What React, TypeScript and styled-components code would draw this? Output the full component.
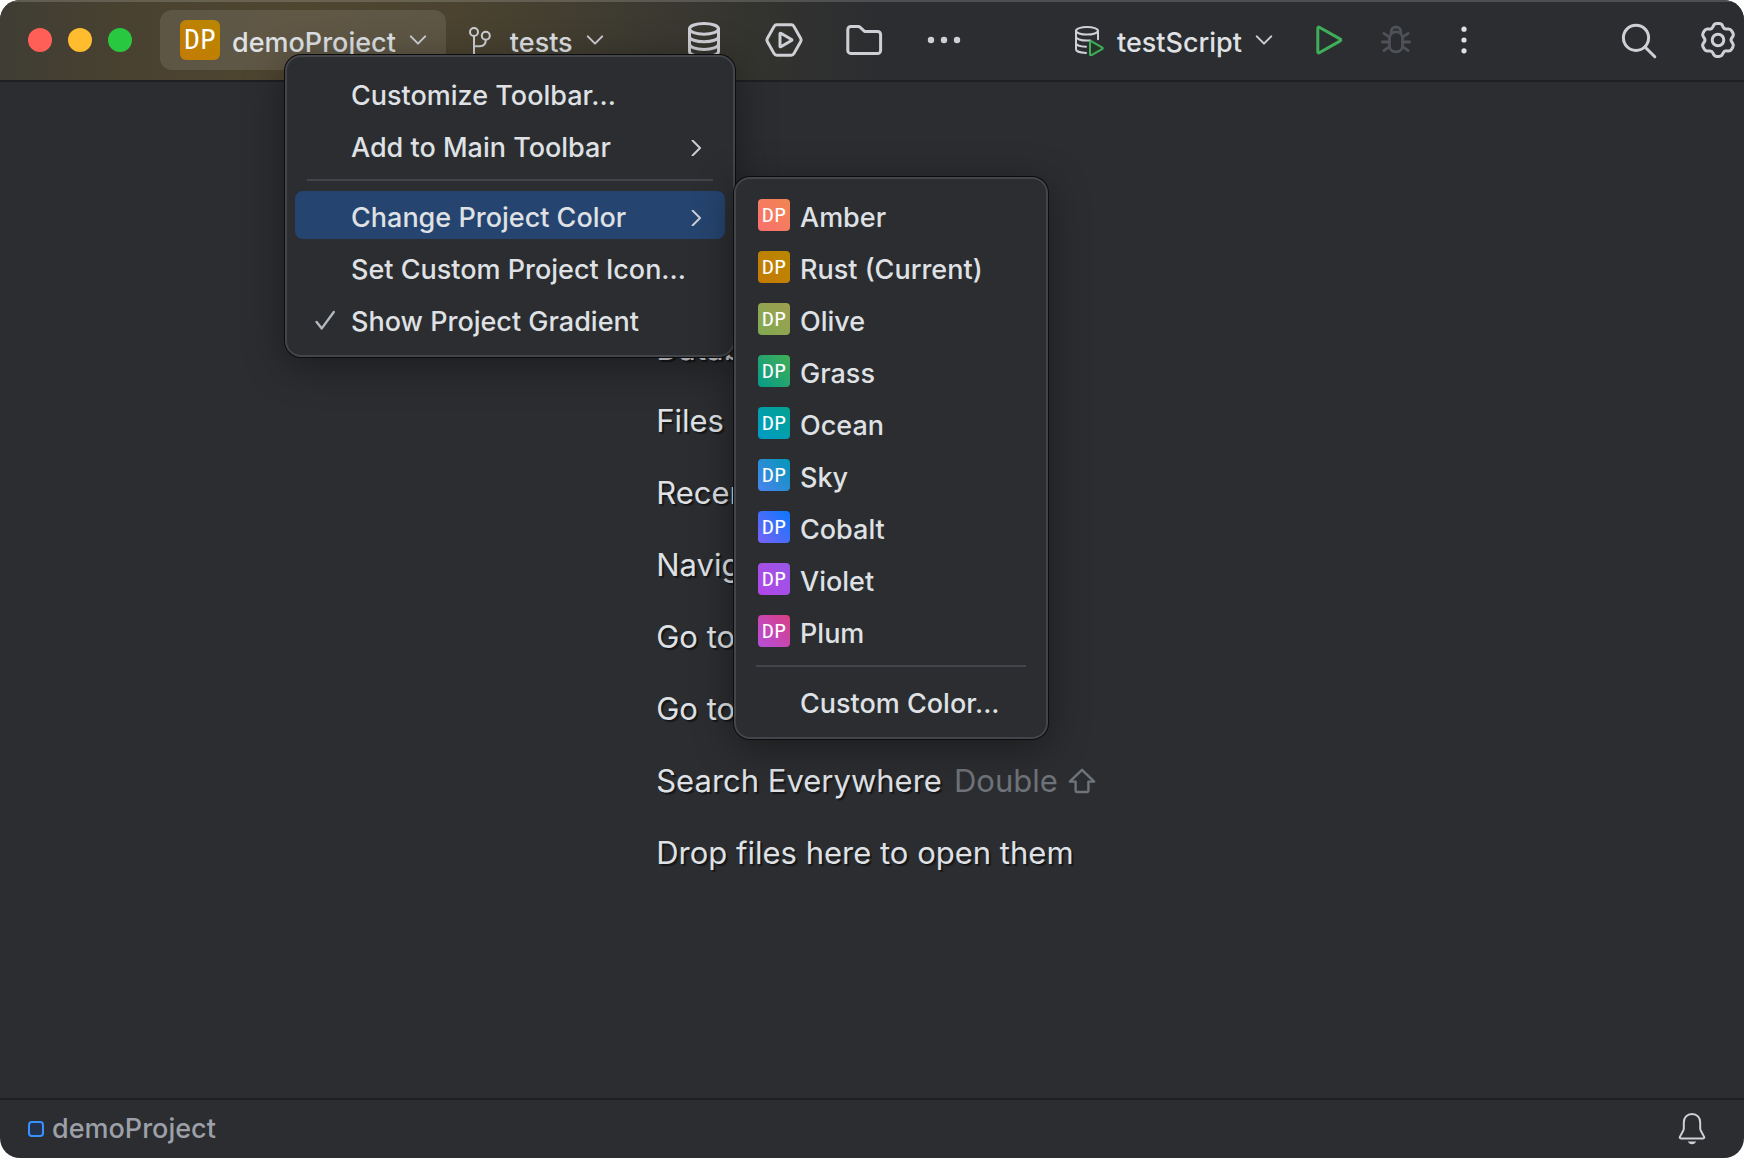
import React from "react";
import styled, { createGlobalStyle, css } from "styled-components";

const GlobalStyle = createGlobalStyle`
  *, *::before, *::after { box-sizing: border-box; }
  html, body, #root { height: 100%; }
  body {
    margin: 0;
    background: #ffffff;
    color: #dfe1e5;
    font-family: Inter, "Liberation Sans", sans-serif;
    font-size: 27px;
    font-weight: 500;
    line-height: 32px;
  }
`;

const resetButton = css`
  border: 0;
  margin: 0;
  padding: 0;
  background: none;
  color: inherit;
  font: inherit;
  text-align: left;
`;

/* ---------- window frame ---------- */

const Window = styled.div`
  display: flex;
  flex-direction: column;
  min-height: 100vh;
  border-radius: 20px;
  overflow: hidden;
  background: #2b2d30;
`;

const Toolbar = styled.header`
  position: relative;
  z-index: 1;
  display: flex;
  align-items: center;
  height: 82px;
  padding: 0 6px 0 28px;
  border-bottom: 2px solid #1e1f22;
  background: linear-gradient(
    90deg,
    #3f3d34 0,
    #4a4230 140px,
    #4f4630 300px,
    #4b4330 460px,
    #3e3b31 620px,
    #33332f 760px,
    #2b2d30 880px
  );
  box-shadow: inset 0 2px 0 rgba(255, 255, 255, 0.16);
`;

const TrafficLights = styled.div`
  display: flex;
  gap: 16px;
  margin-right: 28px;
`;

const Light = styled.button<{ $color: string }>`
  ${resetButton}
  width: 24px;
  height: 24px;
  border-radius: 50%;
  background: ${(p) => p.$color};
`;

const Widget = styled.button<{ $filled?: boolean; $flush?: boolean }>`
  ${resetButton}
  display: flex;
  align-items: center;
  height: 60px;
  padding: 0 ${(p) => (p.$flush ? 0 : 12)}px 0 20px;
  border-radius: 12px;
  background: ${(p) => (p.$filled ? "rgba(255, 255, 255, 0.1)" : "none")};
`;

const WidgetLabel = styled.span`
  padding: 6px 6px 0 12px;
  white-space: nowrap;
`;

const WidgetHost = styled.div`
  position: relative;
`;

const ToolGroup = styled.div<{ $gap: number }>`
  display: flex;
  align-items: center;
  gap: ${(p) => p.$gap}px;
`;

const MainTools = styled(ToolGroup)`
  margin-left: 61px;
`;

const RunTools = styled(ToolGroup)`
  margin-left: auto;
  margin-right: 134px;
`;

const IconButton = styled.button`
  ${resetButton}
  display: grid;
  place-items: center;
  width: 40px;
  height: 40px;
`;

const Icon = styled.svg<{ $size: number }>`
  display: block;
  flex: none;
  width: ${(p) => p.$size}px;
  height: ${(p) => p.$size}px;
  fill: none;
  stroke: #ced0d6;
  stroke-linecap: round;
  stroke-linejoin: round;
`;

/* ---------- project badge ---------- */

const Badge = styled.span<{ $from: string; $to: string; $large?: boolean }>`
  display: grid;
  place-items: center;
  flex: none;
  width: ${(p) => (p.$large ? 40 : 32)}px;
  height: ${(p) => (p.$large ? 40 : 32)}px;
  border-radius: ${(p) => (p.$large ? 6 : 4)}px;
  background: linear-gradient(45deg, ${(p) => p.$from}, ${(p) => p.$to});
  color: #ffffff;
  font-family: "DejaVu Sans Mono", monospace;
  font-size: ${(p) => (p.$large ? 26 : 20)}px;
  font-weight: 400;
  line-height: 32px;
`;

/* ---------- popup menus ---------- */

const menuBox = css`
  position: absolute;
  z-index: 2;
  margin: 0;
  padding: 10px 0;
  list-style: none;
  background: #2b2d30;
  border: 2px solid #43454a;
  border-radius: 16px;
  box-shadow: 0 0 0 1px #0c0d0e, 0 8px 40px rgba(0, 0, 0, 0.4);
`;

const ContextMenu = styled.ul`
  ${menuBox}
  top: 45px;
  left: 125px;
  width: 450px;
`;

const SubMenu = styled.ul`
  ${menuBox}
  top: -12px;
  left: calc(100% + 1px);
  width: 314px;
`;

const MenuEntry = styled.li`
  position: relative;
  padding: 2px 8px;
`;

const MenuButton = styled.button<{ $selected?: boolean }>`
  ${resetButton}
  display: flex;
  align-items: center;
  width: 100%;
  height: 48px;
  padding: 0 20px 0 14px;
  border-radius: 8px;
  background: ${(p) => (p.$selected ? "#25446f" : "none")};
`;

const MenuSlot = styled.span`
  display: flex;
  flex: none;
  width: 42px;
`;

const MenuLabel = styled.span`
  display: flex;
  flex: 1;
  align-items: center;
  justify-content: space-between;
  padding-top: 6px;
  white-space: nowrap;
`;

const Separator = styled.li`
  height: 2px;
  margin: 8px 20px;
  background: #43454a;
`;

/* ---------- editor area ---------- */

const Editor = styled.main`
  flex: 1;
  display: flex;
  align-items: center;
  justify-content: center;
  padding: 22px 0 0 8px;
`;

const Hints = styled.ul`
  margin: 0;
  padding: 0;
  list-style: none;
  font-size: 31px;
  font-weight: 400;
`;

const Hint = styled.li`
  display: flex;
  align-items: center;
  gap: 12px;
  height: 72px;
  white-space: nowrap;
  text-shadow: 2px 2px 1px rgba(0, 0, 0, 0.5);
`;

const Shortcut = styled.span`
  display: flex;
  align-items: center;
  gap: 10px;
  color: #6f737a;
  text-shadow: none;
`;

const StatusBar = styled.footer`
  display: flex;
  align-items: center;
  justify-content: space-between;
  height: 60px;
  padding: 0 32px 0 28px;
  border-top: 2px solid #1e1f22;
`;

const Breadcrumb = styled.button`
  ${resetButton}
  display: flex;
  align-items: center;
  gap: 8px;
  color: #9da0a8;
`;

/* ---------- icons ---------- */

type Point = [number, number];

/** Closed polygon whose corners are rounded by quadratic curves. */
function roundedPolygon(points: Point[], radius: number): string {
  const towards = (a: Point, b: Point): Point => {
    const length = Math.hypot(b[0] - a[0], b[1] - a[1]);
    const t = Math.min(radius / length, 0.5);
    return [a[0] + (b[0] - a[0]) * t, a[1] + (b[1] - a[1]) * t];
  };
  return (
    points
      .map((corner, i) => {
        const before = towards(corner, points[(i + points.length - 1) % points.length]);
        const after = towards(corner, points[(i + 1) % points.length]);
        return `${i === 0 ? "M" : "L"}${before.join(" ")}Q${corner.join(" ")} ${after.join(" ")}`;
      })
      .join("") + "Z"
  );
}

const gearPoints: Point[] = Array.from({ length: 6 }).flatMap((_, lobe) => {
  const angle = (lobe * Math.PI) / 3;
  const profile: Point[] = [[-1.8, -8.2], [1.8, -8.2], [3.05, -5.35]];
  return profile.map(([x, y]): Point => [
    10 + x * Math.cos(angle) - y * Math.sin(angle),
    10 + x * Math.sin(angle) + y * Math.cos(angle),
  ]);
});

const ChevronDown = () => (
  <Icon $size={32} viewBox="0 0 16 16">
    <path d="M4.4 6.2 8 9.8l3.6-3.6" />
  </Icon>
);

const ChevronRight = () => (
  <Icon $size={16} viewBox="0 0 8 8">
    <path d="M1.8.3 5.5 4 1.8 7.7" />
  </Icon>
);

const CheckIcon = () => (
  <Icon $size={32} viewBox="0 0 16 16" strokeWidth="1.2">
    <path d="m3.8 9.5 2.6 3.2 6-8.2" stroke="#b4b8bf" />
  </Icon>
);

const BranchIcon = () => (
  <Icon $size={32} viewBox="0 0 16 16">
    <circle cx="4" cy="4" r="2" />
    <circle cx="9.9" cy="5.9" r="2" />
    <path d="M4 6v9M9.9 7.9c0 2-.9 3.2-2.9 3.2H4" />
  </Icon>
);

const DatabaseIcon = () => (
  <Icon $size={40} viewBox="0 0 20 20" strokeWidth="1.5">
    <ellipse cx="10" cy="4.4" rx="7.25" ry="2.7" />
    <path d="M2.75 4.4v11.3c0 1.5 3.2 2.7 7.25 2.7s7.25-1.2 7.25-2.7V4.4" />
    <path d="M2.75 8.2c0 1.5 3.2 2.7 7.25 2.7s7.25-1.2 7.25-2.7M2.75 12c0 1.5 3.2 2.7 7.25 2.7s7.25-1.2 7.25-2.7" />
  </Icon>
);

const ServicesIcon = () => (
  <Icon $size={40} viewBox="0 0 20 20" strokeWidth="1.5">
    <path d={roundedPolygon([[1.2, 10], [5.5, 2.4], [14.5, 2.4], [18.8, 10], [14.5, 17.6], [5.5, 17.6]], 0.9)} />
    <path d={roundedPolygon([[8, 6.4], [14.2, 10], [8, 13.6]], 0.5)} />
  </Icon>
);

const FolderIcon = () => (
  <Icon $size={40} viewBox="0 0 20 20" strokeWidth="1.5">
    <path d="M1.9 4.8c0-.9.7-1.5 1.5-1.5h3.7c.4 0 .7.1 1 .4l2.2 2h6.5c.9 0 1.5.7 1.5 1.5v8c0 .9-.7 1.5-1.5 1.5H3.4c-.9 0-1.5-.7-1.5-1.5z" />
  </Icon>
);

const MoreIcon = () => (
  <Icon $size={40} viewBox="0 0 20 20">
    <g fill="#ced0d6" stroke="none">
      <circle cx="3.5" cy="10" r="1.6" />
      <circle cx="10" cy="10" r="1.6" />
      <circle cx="16.5" cy="10" r="1.6" />
    </g>
  </Icon>
);

const KebabIcon = () => (
  <Icon $size={40} viewBox="0 0 20 20">
    <g fill="#dfe1e5" stroke="none">
      <circle cx="10" cy="4.6" r="1.3" />
      <circle cx="10" cy="10" r="1.3" />
      <circle cx="10" cy="15.4" r="1.3" />
    </g>
  </Icon>
);

const ScriptIcon = () => (
  <Icon $size={32} viewBox="0 0 16 16">
    <ellipse cx="7" cy="3.4" rx="5.5" ry="1.9" />
    <path d="M1.5 3.4v9.2c0 1 2.1 1.8 5 1.9M12.5 3.4v4.2" />
    <path d="M1.5 6.4c0 1 2.4 1.9 5.5 1.9.6 0 1.2 0 1.7-.1M1.5 9.5c0 1 2.1 1.8 5 1.9" />
    <path d={roundedPolygon([[8.5, 8.2], [15.3, 12.1], [8.5, 16]], 0.9)} fill="#253627" stroke="#3fae5a" />
  </Icon>
);

const PlayIcon = () => (
  <Icon $size={40} viewBox="0 0 20 20" strokeWidth="1.5">
    <path d={roundedPolygon([[4.9, 3.2], [16.9, 10], [4.9, 16.8]], 1.1)} stroke="#3fae5a" />
  </Icon>
);

const BugIcon = () => (
  <Icon $size={40} viewBox="0 0 20 20" strokeWidth="1.4">
    <g stroke="#4e5157">
      <path d="M6.7 9.2c0-1.9 1.4-3.3 3.3-3.3s3.3 1.4 3.3 3.3v3.4c0 1.9-1.4 3.3-3.3 3.3s-3.3-1.4-3.3-3.3z" />
      <path d="M7.6 6.4V5.7C7.6 4.4 8.6 3.5 10 3.5s2.4.9 2.4 2.2v.7" />
      <path d="M6.7 11H3.2M13.3 11h3.5M6.7 8.6 3.9 6.7M13.3 8.6l2.8-1.9M6.7 13.4l-2.8 1.9M13.3 13.4l2.8 1.9" />
    </g>
  </Icon>
);

const SearchIcon = () => (
  <Icon $size={40} viewBox="0 0 20 20" strokeWidth="1.5">
    <circle cx="9" cy="8.9" r="6.3" />
    <path d="m13.5 13.5 4.9 4.9" />
  </Icon>
);

const GearIcon = () => (
  <Icon $size={40} viewBox="0 0 20 20" strokeWidth="1.5">
    <path d={roundedPolygon(gearPoints, 1.2)} />
    <circle cx="10" cy="10" r="2.9" />
  </Icon>
);

const BellIcon = () => (
  <Icon $size={40} viewBox="0 0 20 20">
    <path d="M10 2.5c-2.5 0-4.1 1.8-4.1 4.2v2.9c0 .5-.1.9-.4 1.4L4 13.8c-.3.5-.1.9.4.9h11.2c.5 0 .7-.4.4-.9L14.5 11c-.3-.5-.4-.9-.4-1.4V6.7c0-2.4-1.6-4.2-4.1-4.2z" />
    <path d="M7.9 16.2h4.2c-.4.8-1.1 1.4-2.1 1.4s-1.7-.6-2.1-1.4z" fill="#ced0d6" stroke="none" />
  </Icon>
);

const ShiftIcon = () => (
  <Icon $size={28} viewBox="0 0 14 14" strokeWidth="1.2">
    <path d="M7 1.4.9 7.3h2.9v4.6c0 .4.2.6.6.6h5.2c.4 0 .6-.2.6-.6V7.3h2.9z" stroke="#6f737a" />
  </Icon>
);

const ModuleIcon = () => (
  <Icon $size={16} viewBox="0 0 8 8">
    <rect x=".5" y=".5" width="7" height="7" rx="1.4" fill="#25324d" stroke="#3592ff" />
  </Icon>
);

/* ---------- page ---------- */

const projectColors = [
  { name: "Amber", from: "#fb7070", to: "#f08650" },
  { name: "Rust (Current)", from: "#c57a05", to: "#b98700" },
  { name: "Olive", from: "#80aa52", to: "#9f9f4f" },
  { name: "Grass", from: "#059b89", to: "#43ae55" },
  { name: "Ocean", from: "#009bc9", to: "#03a38e" },
  { name: "Sky", from: "#4b83f0", to: "#0398b8" },
  { name: "Cobalt", from: "#7a62fa", to: "#0a78fb" },
  { name: "Violet", from: "#b345e8", to: "#9658e5" },
  { name: "Plum", from: "#b44fdc", to: "#d93e84" },
];

const hints = ["Database View", "Files View", "Recent Files", "Navigation Bar", "Go to Class", "Go to File"];

function ProjectColorMenu() {
  return (
    <SubMenu aria-label="Change Project Color">
      {projectColors.map((color) => (
        <MenuEntry key={color.name}>
          <MenuButton>
            <MenuSlot>
              <Badge $from={color.from} $to={color.to}>DP</Badge>
            </MenuSlot>
            <MenuLabel>{color.name}</MenuLabel>
          </MenuButton>
        </MenuEntry>
      ))}
      <Separator role="separator" />
      <MenuEntry>
        <MenuButton>
          <MenuSlot />
          <MenuLabel>Custom Color...</MenuLabel>
        </MenuButton>
      </MenuEntry>
    </SubMenu>
  );
}

interface MenuRowProps {
  label: string;
  checked?: boolean;
  selected?: boolean;
  hasSubmenu?: boolean;
  children?: React.ReactNode;
}

function MenuRow({ label, checked, selected, hasSubmenu, children }: MenuRowProps) {
  return (
    <MenuEntry>
      <MenuButton $selected={selected} aria-haspopup={hasSubmenu ? "menu" : undefined}>
        <MenuSlot>{checked && <CheckIcon />}</MenuSlot>
        <MenuLabel>
          {label}
          {hasSubmenu && <ChevronRight />}
        </MenuLabel>
      </MenuButton>
      {children}
    </MenuEntry>
  );
}

export default function App() {
  return (
    <>
      <GlobalStyle />
      <Window>
        <Toolbar>
          <TrafficLights>
            <Light $color="#ff5f57" aria-label="Close" />
            <Light $color="#febc2e" aria-label="Minimize" />
            <Light $color="#28c840" aria-label="Zoom" />
          </TrafficLights>
          <WidgetHost>
            <Widget $filled>
              <Badge $large $from="#c57a05" $to="#b98700">DP</Badge>
              <WidgetLabel>demoProject</WidgetLabel>
              <ChevronDown />
            </Widget>
            <ContextMenu aria-label="Project widget">
              <MenuRow label="Customize Toolbar..." />
              <MenuRow label="Add to Main Toolbar" hasSubmenu />
              <Separator role="separator" />
              <MenuRow label="Change Project Color" hasSubmenu selected>
                <ProjectColorMenu />
              </MenuRow>
              <MenuRow label="Set Custom Project Icon..." />
              <MenuRow label="Show Project Gradient" checked />
            </ContextMenu>
          </WidgetHost>
          <Widget>
            <BranchIcon />
            <WidgetLabel>tests</WidgetLabel>
            <ChevronDown />
          </Widget>
          <MainTools $gap={40}>
            <IconButton aria-label="Database"><DatabaseIcon /></IconButton>
            <IconButton aria-label="Services"><ServicesIcon /></IconButton>
            <IconButton aria-label="Files"><FolderIcon /></IconButton>
            <IconButton aria-label="More tool windows"><MoreIcon /></IconButton>
          </MainTools>
          <RunTools $gap={28}>
            <Widget $flush>
              <ScriptIcon />
              <WidgetLabel>testScript</WidgetLabel>
              <ChevronDown />
            </Widget>
            <IconButton aria-label="Run"><PlayIcon /></IconButton>
            <IconButton aria-label="Debug" disabled><BugIcon /></IconButton>
            <IconButton aria-label="More actions"><KebabIcon /></IconButton>
          </RunTools>
          <ToolGroup $gap={40}>
            <IconButton aria-label="Search"><SearchIcon /></IconButton>
            <IconButton aria-label="Settings"><GearIcon /></IconButton>
          </ToolGroup>
        </Toolbar>
        <Editor>
          <Hints>
            {hints.map((hint) => (
              <Hint key={hint}>{hint}</Hint>
            ))}
            <Hint>
              Search Everywhere
              <Shortcut>
                Double <ShiftIcon />
              </Shortcut>
            </Hint>
            <Hint>Drop files here to open them</Hint>
          </Hints>
        </Editor>
        <StatusBar>
          <Breadcrumb>
            <ModuleIcon />
            demoProject
          </Breadcrumb>
          <IconButton aria-label="Notifications"><BellIcon /></IconButton>
        </StatusBar>
      </Window>
    </>
  );
}
